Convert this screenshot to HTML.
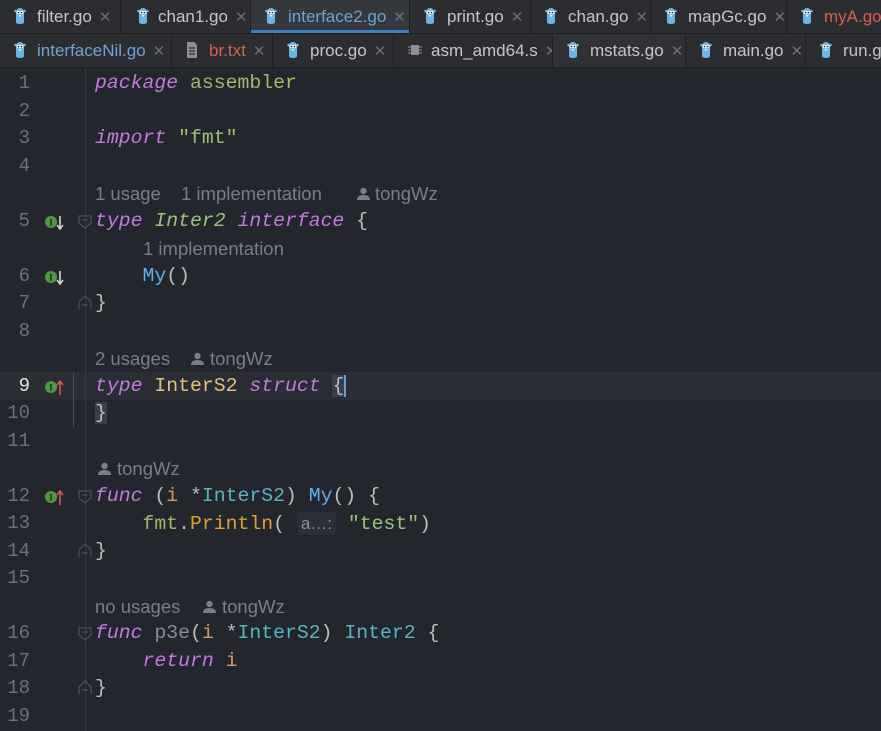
<!DOCTYPE html>
<html><head><meta charset="utf-8"><style>
*{margin:0;padding:0;box-sizing:border-box}
body{width:881px;height:731px;overflow:hidden;background:#23262c;position:relative;font-family:"Liberation Sans",sans-serif}
.tabrow{position:absolute;left:0;width:881px;height:34px;background:#2b2d30;border-bottom:1px solid #1e1f22}
.tab{position:absolute;top:0;height:33px;border-right:1px solid #1e1f22;color:#c3c6cc;font-size:17px;line-height:34px;white-space:nowrap;overflow:hidden}
.tab svg{position:absolute;left:14px;top:8px}
.tab .t{position:absolute;left:37px}
.tab .x{color:#6b6e74;font-size:15px;margin-left:7px}
.act{background:#34373c}
.act:after{content:"";position:absolute;left:0;right:0;bottom:0;height:3px;background:#3d7fc4}
.row{position:absolute;left:0;width:881px;height:27.5px;line-height:27.5px}
.ln{position:absolute;right:851px;color:#6c7078;font-family:"Liberation Mono",monospace;font-size:19px;text-align:right;width:40px}
.code{position:absolute;left:95px;font-family:"Liberation Mono",monospace;font-size:19.8px;color:#bcbec4;white-space:pre}
.inl{position:absolute;color:#7a7e85;font-size:18.5px;white-space:pre}
.pi{position:absolute;top:7px}
.k{color:#c678dd;font-style:italic}
.g{color:#98c379;font-style:italic}
.y{color:#e5c07b}
.b{color:#61afef}
.s{color:#98c379}
.o{color:#d19a66}
.c{color:#56b6c2}
.f{color:#a9b665}
.p{color:#e0a030}
.d{color:#888c93}
.ic{position:absolute;left:44px;top:7px}
.fold{position:absolute;left:78px;width:14px;height:14px}
</style></head><body>
<svg width="0" height="0" style="position:absolute"><defs>
<g id="go"><path d="M2 5 Q2 0 6 0 Q10 0 10 5 L10 14 Q10 16 6 16 Q2 16 2 14Z" fill="#6cb6e6"/><circle cx="1.5" cy="3" r="1.3" fill="#6cb6e6"/><circle cx="10.5" cy="3" r="1.3" fill="#6cb6e6"/><circle cx="4.3" cy="4.5" r="1.8" fill="#fff"/><circle cx="7.7" cy="4.5" r="1.8" fill="#fff"/><circle cx="4.5" cy="4.6" r=".8" fill="#222"/><circle cx="7.5" cy="4.6" r=".8" fill="#222"/><rect x="5" y="7" width="2" height="1.5" fill="#eee"/></g>
<g id="pr"><circle cx="6.5" cy="4" r="3.2" fill="#7a7e85"/><path d="M0 13 Q0 8 6.5 8 Q13 8 13 13Z" fill="#7a7e85"/></g>
</defs></svg>

<div class="tabrow" style="top:0">
<div class="tab" style="left:0;width:121px"><svg width="12" height="17"><use href="#go"/></svg><span class="t">filter.go<span class="x">✕</span></span></div>
<div class="tab" style="left:121px;width:130px"><svg width="12" height="17" style="left:16px"><use href="#go"/></svg><span class="t">chan1.go<span class="x">✕</span></span></div>
<div class="tab act" style="left:251px;width:159px"><svg width="12" height="17"><use href="#go"/></svg><span class="t" style="color:#6fa3d6">interface2.go<span class="x">✕</span></span></div>
<div class="tab" style="left:410px;width:121px"><svg width="12" height="17"><use href="#go"/></svg><span class="t">print.go<span class="x">✕</span></span></div>
<div class="tab" style="left:531px;width:120px"><svg width="12" height="17"><use href="#go"/></svg><span class="t">chan.go<span class="x">✕</span></span></div>
<div class="tab" style="left:651px;width:136px"><svg width="12" height="17"><use href="#go"/></svg><span class="t">mapGc.go<span class="x">✕</span></span></div>
<div class="tab" style="left:787px;width:94px;border:0"><svg width="12" height="17"><use href="#go"/></svg><span class="t" style="color:#d9604f">myA.go</span></div>
</div>
<div class="tabrow" style="top:34px">
<div class="tab" style="left:0;width:172px"><svg width="12" height="17"><use href="#go"/></svg><span class="t" style="color:#6fa3d6">interfaceNil.go<span class="x">✕</span></span></div>
<div class="tab" style="left:172px;width:101px"><svg width="12" height="17"><path d="M1 0H8L11 3V16H1Z" fill="#8c8f94"/><path d="M3 6H9M3 9H9M3 12H9" stroke="#2b2d30" stroke-width="1.2"/></svg><span class="t" style="color:#d9604f">br.txt<span class="x">✕</span></span></div>
<div class="tab" style="left:273px;width:121px"><svg width="12" height="17"><use href="#go"/></svg><span class="t">proc.go<span class="x">✕</span></span></div>
<div class="tab" style="left:394px;width:159px"><svg width="14" height="17"><rect x="3" y="3" width="8" height="10" fill="#8c8f94"/><path d="M0 5H3M0 8H3M0 11H3M11 5H14M11 8H14M11 11H14" stroke="#8c8f94"/></svg><span class="t">asm_amd64.s<span class="x">✕</span></span></div>
<div class="tab" style="left:553px;width:133px;background:#2f3135"><svg width="12" height="17"><use href="#go"/></svg><span class="t">mstats.go<span class="x">✕</span></span></div>
<div class="tab" style="left:686px;width:120px"><svg width="12" height="17"><use href="#go"/></svg><span class="t">main.go<span class="x">✕</span></span></div>
<div class="tab" style="left:806px;width:75px;border:0"><svg width="12" height="17"><use href="#go"/></svg><span class="t">run.go</span></div>
</div>

<div style="position:absolute;left:0;top:372px;width:881px;height:28px;background:#2a2d33"></div>
<div style="position:absolute;left:85px;top:68px;width:1px;height:663px;background:#363a40"></div>
<div style="position:absolute;left:73px;top:372px;width:1px;height:55px;background:#4a4d53"></div>

<div class="row" style="top:70px"><span class="ln">1</span><span class="code"><span class="k">package</span> <span class="f">assembler</span></span></div>
<div class="row" style="top:97.5px"><span class="ln">2</span></div>
<div class="row" style="top:125px"><span class="ln">3</span><span class="code"><span class="k">import</span> <span class="s">"fmt"</span></span></div>
<div class="row" style="top:152.5px"><span class="ln">4</span></div>
<div class="row" style="top:180px"><span class="inl" style="left:95px">1 usage</span><span class="inl" style="left:181px">1 implementation</span><svg class="pi" style="left:357px" width="13" height="13"><use href="#pr"/></svg><span class="inl" style="left:375px">tongWz</span></div>
<div class="row" style="top:207.5px"><span class="ln">5</span><svg class="ic" width="24" height="16"><circle cx="7" cy="7" r="6" fill="#4e9a3f"/><text x="7" y="10.5" font-size="9" fill="#1e2a1a" text-anchor="middle" font-family="Liberation Serif" font-weight="bold">I</text><path d="M16 1V13M13 10L16 14L19 10" stroke="#d0d2d6" stroke-width="1.6" fill="none"/></svg><svg class="fold" style="top:7px" width="14" height="14"><path d="M1 1H13V8L7 13L1 8Z" fill="none" stroke="#55585e"/><path d="M4 5H10" stroke="#55585e"/></svg><span class="code"><span class="k">type</span> <span class="g">Inter2</span> <span class="k">interface</span> {</span></div>
<div class="row" style="top:235px"><span class="inl" style="left:143px">1 implementation</span></div>
<div class="row" style="top:262.5px"><span class="ln">6</span><svg class="ic" width="24" height="16"><circle cx="7" cy="7" r="6" fill="#4e9a3f"/><text x="7" y="10.5" font-size="9" fill="#1e2a1a" text-anchor="middle" font-family="Liberation Serif" font-weight="bold">I</text><path d="M16 1V13M13 10L16 14L19 10" stroke="#d0d2d6" stroke-width="1.6" fill="none"/></svg><span class="code">    <span class="b">My</span>()</span></div>
<div class="row" style="top:290px"><span class="ln">7</span><svg class="fold" style="top:5px" width="14" height="16"><path d="M1 15H13V7L7 1L1 7Z" fill="none" stroke="#55585e"/><path d="M4 10H10" stroke="#55585e"/></svg><span class="code">}</span></div>
<div class="row" style="top:317.5px"><span class="ln">8</span></div>
<div class="row" style="top:345px"><span class="inl" style="left:95px">2 usages</span><svg class="pi" style="left:191px" width="13" height="13"><use href="#pr"/></svg><span class="inl" style="left:210px">tongWz</span></div>
<div class="row" style="top:372.5px"><span class="ln" style="color:#dfe1e5">9</span><svg class="ic" width="24" height="16"><circle cx="7" cy="7" r="6" fill="#4e9a3f"/><text x="7" y="10.5" font-size="9" fill="#1e2a1a" text-anchor="middle" font-family="Liberation Serif" font-weight="bold">I</text><path d="M16 15V2M13 5L16 1L19 5" stroke="#d9534f" stroke-width="1.6" fill="none"/></svg><span class="code"><span class="k">type</span> <span class="y">InterS2</span> <span class="k">struct</span> <span style="background:#3b4048;border-right:2px solid #5c9fe0">{</span></span></div>
<div class="row" style="top:400px"><span class="ln">10</span><span class="code"><span style="background:#3b4048">}</span></span></div>
<div class="row" style="top:427.5px"><span class="ln">11</span></div>
<div class="row" style="top:455px"><svg class="pi" style="left:98px" width="13" height="13"><use href="#pr"/></svg><span class="inl" style="left:117px">tongWz</span></div>
<div class="row" style="top:482.5px"><span class="ln">12</span><svg class="ic" width="24" height="16"><circle cx="7" cy="7" r="6" fill="#4e9a3f"/><text x="7" y="10.5" font-size="9" fill="#1e2a1a" text-anchor="middle" font-family="Liberation Serif" font-weight="bold">I</text><path d="M16 15V2M13 5L16 1L19 5" stroke="#d9534f" stroke-width="1.6" fill="none"/></svg><svg class="fold" style="top:7px" width="14" height="14"><path d="M1 1H13V8L7 13L1 8Z" fill="none" stroke="#55585e"/><path d="M4 5H10" stroke="#55585e"/></svg><span class="code"><span class="k">func</span> (<span class="o">i</span> *<span class="c">InterS2</span>) <span class="b">My</span>() {</span></div>
<div class="row" style="top:510px"><span class="ln">13</span><span class="code">    <span class="f">fmt</span>.<span class="p">Println</span>( <span style="font-family:'Liberation Sans',sans-serif;font-size:17px;color:#8b8f96;background:#2c2f35;padding:2px 4px;border-radius:4px">a…:</span> <span class="s">"test"</span>)</span></div>
<div class="row" style="top:537.5px"><span class="ln">14</span><svg class="fold" style="top:5px" width="14" height="16"><path d="M1 15H13V7L7 1L1 7Z" fill="none" stroke="#55585e"/><path d="M4 10H10" stroke="#55585e"/></svg><span class="code">}</span></div>
<div class="row" style="top:565px"><span class="ln">15</span></div>
<div class="row" style="top:592.5px"><span class="inl" style="left:95px">no usages</span><svg class="pi" style="left:203px" width="13" height="13"><use href="#pr"/></svg><span class="inl" style="left:222px">tongWz</span></div>
<div class="row" style="top:620px"><span class="ln">16</span><svg class="fold" style="top:7px" width="14" height="14"><path d="M1 1H13V8L7 13L1 8Z" fill="none" stroke="#55585e"/><path d="M4 5H10" stroke="#55585e"/></svg><span class="code"><span class="k">func</span> <span class="d">p3e</span>(<span class="o">i</span> *<span class="c">InterS2</span>) <span class="c">Inter2</span> {</span></div>
<div class="row" style="top:647.5px"><span class="ln">17</span><span class="code">    <span class="k">return</span> <span class="o">i</span></span></div>
<div class="row" style="top:675px"><span class="ln">18</span><svg class="fold" style="top:5px" width="14" height="16"><path d="M1 15H13V7L7 1L1 7Z" fill="none" stroke="#55585e"/><path d="M4 10H10" stroke="#55585e"/></svg><span class="code">}</span></div>
<div class="row" style="top:702.5px"><span class="ln">19</span></div>
</body></html>
